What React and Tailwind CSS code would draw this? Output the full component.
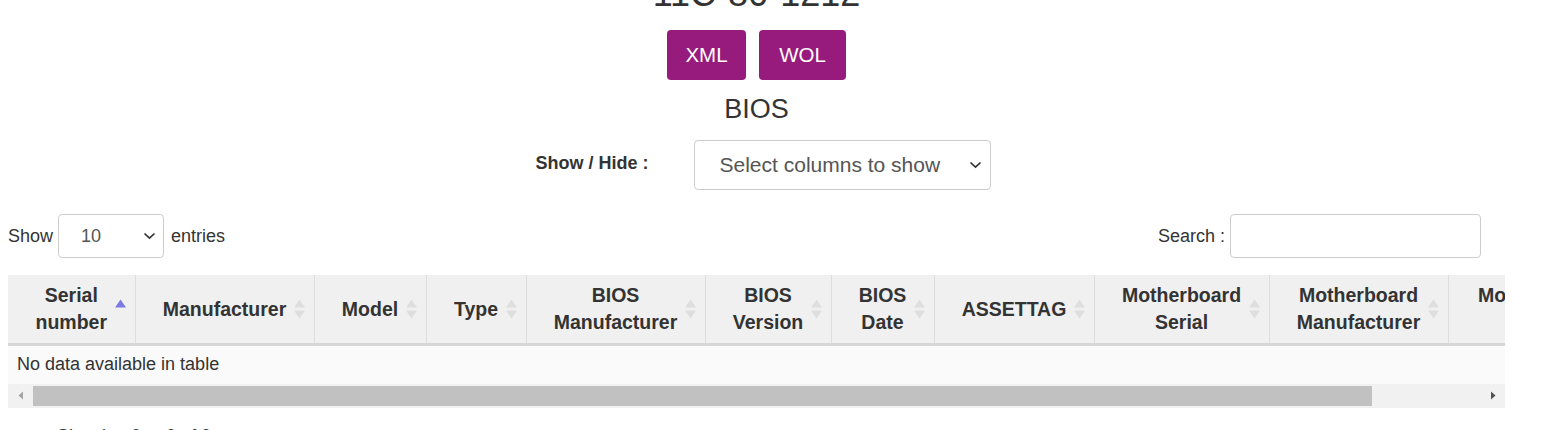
import React from 'react';

const columns = [
    { label: ['Serial', 'number'], width: 127, sorted: true },
    { label: ['Manufacturer'], width: 179 },
    { label: ['Model'], width: 112 },
    { label: ['Type'], width: 100 },
    { label: ['BIOS', 'Manufacturer'], width: 179 },
    { label: ['BIOS', 'Version'], width: 126 },
    { label: ['BIOS', 'Date'], width: 103 },
    { label: ['ASSETTAG'], width: 160 },
    { label: ['Motherboard', 'Serial'], width: 175 },
    { label: ['Motherboard', 'Manufacturer'], width: 179 },
    { label: ['Motherboard', 'Model'], width: 179 },
];

const SortIcon = ({ sorted }) => (
    <svg width="13" height="23" viewBox="0 0 13 23" className="absolute right-[8px] top-1/2 -translate-y-1/2">
        {sorted ? (
            <polygon points="1,10 6.5,2 12,10" fill="#7b7be0" />
        ) : (
            <>
                <polygon points="1,10 6.5,2 12,10" fill="#dedede" />
                <polygon points="1,13 12,13 6.5,21" fill="#dedede" />
            </>
        )}
    </svg>
);

const Chevron = () => (
    <svg width="13" height="8" viewBox="0 0 13 8">
        <polyline points="1.5,1.5 6.5,6.2 11.5,1.5" fill="none" stroke="#333" strokeWidth="1.7" />
    </svg>
);

const App = () => {
    return (
        <div className="font-['Liberation_Sans',Arial,sans-serif] text-[#333] bg-white min-h-screen overflow-hidden pl-[8px]">
            <div className="w-[1497px]">
                {/* host title, mostly scrolled off the top */}
                <h1 className="-mt-[26px] text-center text-[36px] leading-[40px]">11C-80-1212</h1>

                <div className="mt-[16px] flex justify-center gap-[13px]">
                    <button className="h-[50px] w-[79px] rounded-[4px] bg-[#961b7d] text-[20.5px] text-white">XML</button>
                    <button className="h-[50px] w-[87px] rounded-[4px] bg-[#961b7d] text-[20.5px] text-white">WOL</button>
                </div>

                <h4 className="mt-[14px] text-center text-[27px] leading-[30px]">BIOS</h4>

                <div className="mt-[16px] flex items-center justify-center gap-[45px] pl-[13px]">
                    <label className="mb-[5px] text-[18px] font-bold leading-[26px]">Show / Hide :</label>
                    <div className="flex h-[50px] w-[297px] items-center justify-between rounded-[4px] border border-[#cccccc] pl-[25px] pr-[8px]">
                        <span className="text-[21px] leading-[30px] text-[#555]">Select columns to show</span>
                        <Chevron />
                    </div>
                </div>

                <div className="mt-[24px] flex items-center justify-between pr-[24px] text-[18px] leading-[26px]">
                    <div className="flex items-center">
                        <span>Show</span>
                        <div className="ml-[5px] flex h-[44px] w-[106px] items-center justify-between rounded-[4px] border border-[#cccccc] pl-[22px] pr-[7px]">
                            <span className="text-[#555]">10</span>
                            <Chevron />
                        </div>
                        <span className="ml-[7px]">entries</span>
                    </div>
                    <div className="flex items-center">
                        <span>Search :</span>
                        <input className="ml-[5px] h-[44px] w-[251px] rounded-[4px] border border-[#cccccc] px-3 outline-none" />
                    </div>
                </div>

                <div className="mt-[17px] overflow-hidden">
                    <table className="table-fixed border-collapse" style={{ width: columns.reduce((s, c) => s + c.width, 0) }}>
                        <colgroup>
                            {columns.map((c, i) => (
                                <col key={i} style={{ width: c.width }} />
                            ))}
                        </colgroup>
                        <thead>
                            <tr className="h-[68px] border-b-[3px] border-[#d6d6d6] bg-[#f0f0f0]">
                                {columns.map((c, i) => (
                                    <th
                                        key={i}
                                        className="relative border-r border-[#dddddd] px-[24px] py-[7px] text-center text-[19.5px] font-bold leading-[27px] whitespace-nowrap"
                                    >
                                        {c.label.map((l, j) => (
                                            <div key={j}>{l}</div>
                                        ))}
                                        <SortIcon sorted={c.sorted} />
                                    </th>
                                ))}
                            </tr>
                        </thead>
                        <tbody>
                            <tr className="bg-[#fafafa]">
                                <td colSpan={columns.length} className="h-[39px] px-[9px] text-[18px] leading-[25px]">
                                    No data available in table
                                </td>
                            </tr>
                        </tbody>
                    </table>
                </div>

                {/* horizontal scrollbar of the table wrapper */}
                <div className="flex h-[24px] items-center bg-[#f1f1f1]">
                    <div className="flex w-[25px] justify-center">
                        <svg width="6" height="9" viewBox="0 0 6 9">
                            <polygon points="5,0.5 5,8.5 0.5,4.5" fill="#a3a3a3" />
                        </svg>
                    </div>
                    <div className="h-[20px] w-[1339px] bg-[#c1c1c1]" />
                    <div className="flex-1" />
                    <div className="flex w-[25px] justify-center">
                        <svg width="6" height="9" viewBox="0 0 6 9">
                            <polygon points="1,0.5 1,8.5 5.5,4.5" fill="#505050" />
                        </svg>
                    </div>
                </div>

                <div className="mt-[15px] pl-[49px] text-[18px] leading-[26px]">Showing 0 to 0 of 0</div>
            </div>
        </div>
    );
};

export default App;
